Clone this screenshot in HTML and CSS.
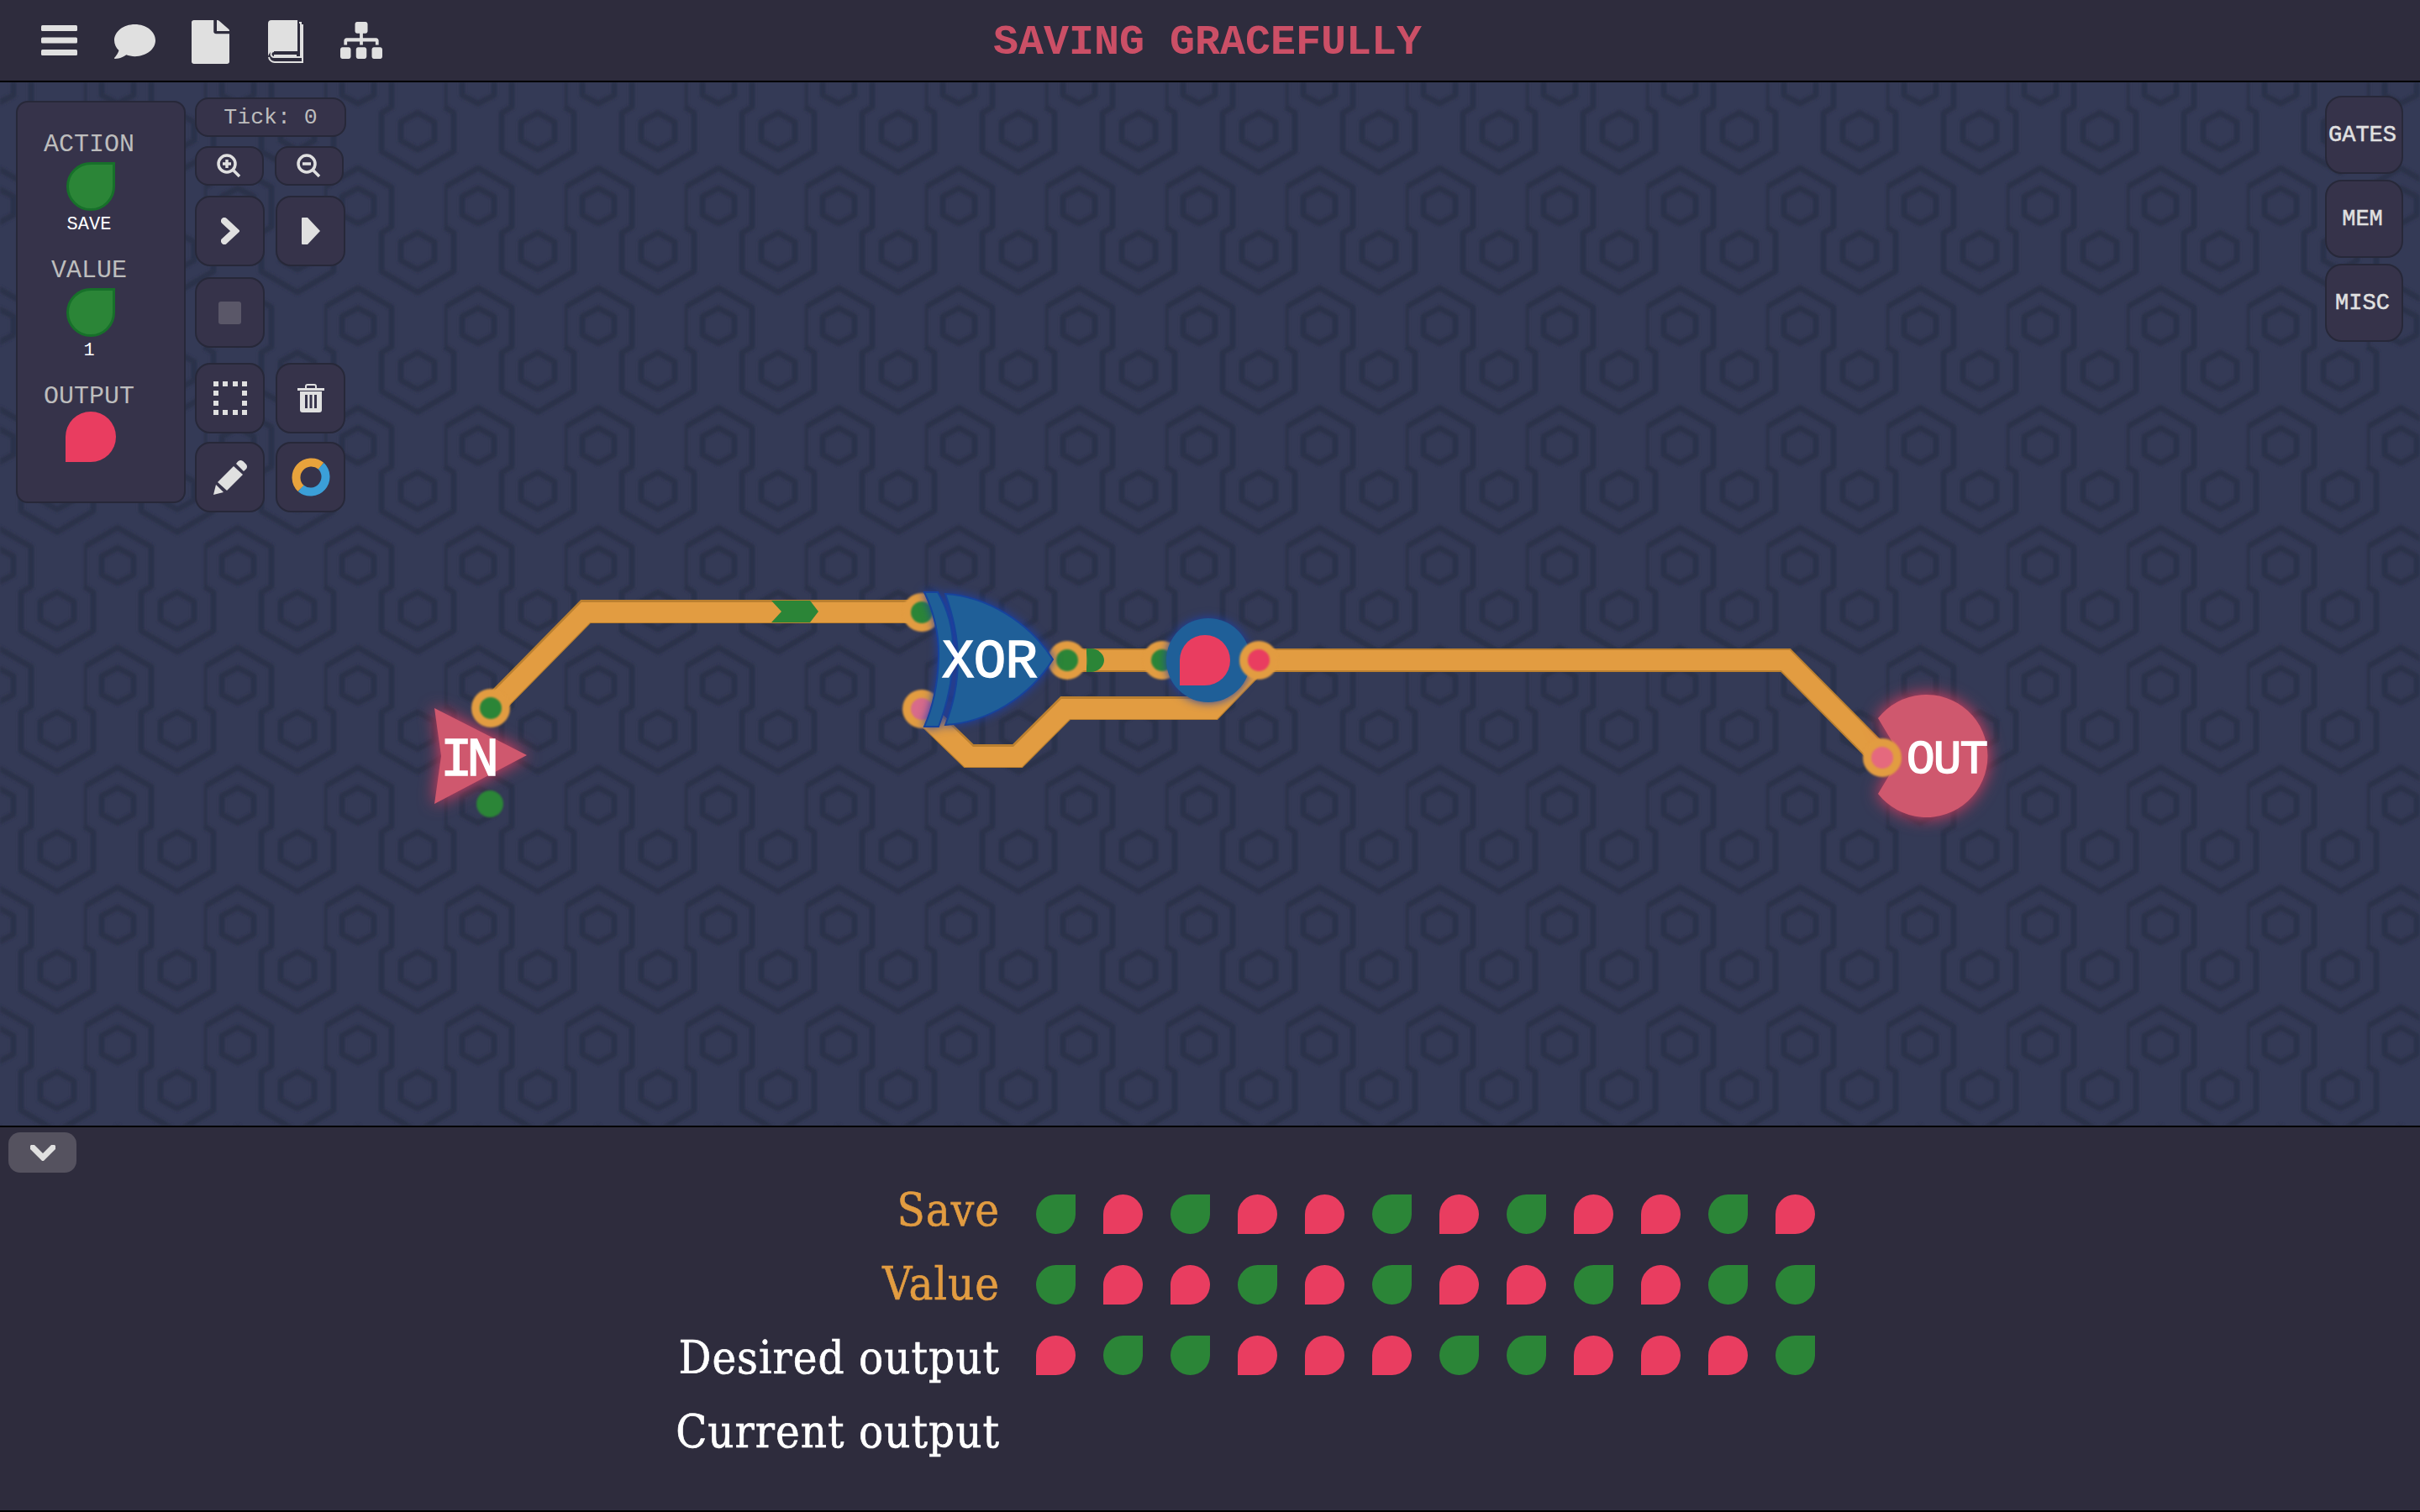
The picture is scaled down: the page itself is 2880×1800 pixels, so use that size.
FILE: index.html
```html
<!DOCTYPE html>
<html lang="en">
<head>
<meta charset="utf-8">
<title>Saving Gracefully</title>
<link rel="stylesheet" href="styles.css">
</head>
<body>
<div class="app">
  <header class="topbar">
    <nav class="menu">
      <span class="menu-item"><svg class="ic-bars" viewBox="0 0 43 36"><rect y="0" width="43" height="7" rx="1.5"/><rect y="14.500" width="43" height="7" rx="1.5"/><rect y="29" width="43" height="7" rx="1.5"/></svg></span>
      <span class="menu-item"><svg class="ic-chat" viewBox="0 0 512 512" preserveAspectRatio="none"><path d="M256 32C114.600 32 0 125.100 0 240c0 49.600 21.400 95 57 130.700C44.500 421.100 2.700 466 2.200 466.500c-2.200 2.300-2.800 5.700-1.500 8.700S4.800 480 8 480c66.300 0 116-31.800 140.600-51.400 32.700 12.300 69 19.400 107.400 19.400 141.400 0 256-93.100 256-208S397.400 32 256 32z"/></svg></span>
      <span class="menu-item"><svg class="ic-file" viewBox="0 0 384 512" preserveAspectRatio="none"><path d="M224 136V0H24C10.700 0 0 10.700 0 24v464c0 13.300 10.700 24 24 24h336c13.300 0 24-10.700 24-24V160H248c-13.200 0-24-10.800-24-24zm160-14.100v6.100H256V0h6.100c6.400 0 12.500 2.500 17 7l97.900 98c4.500 4.500 7 10.600 7 16.900z"/></svg></span>
      <span class="menu-item"><svg class="ic-book" viewBox="0 0 42 51"><path d="M4 0h31v37H8a8 8 0 0 0-8 6V4a4 4 0 0 1 4-4z"/><path d="M37 3h2v41H7a3.500 3.500 0 0 1 0-7h0" class="book-line"/><path d="M41 5v45H8a7 7 0 0 1-7-6" class="book-line"/><rect x="7" y="41" width="27" height="2.500"/></svg></span>
      <span class="menu-item"><svg class="ic-map" viewBox="0 0 640 512" preserveAspectRatio="none"><path d="M128 352H32c-17.670 0-32 14.330-32 32v96c0 17.670 14.330 32 32 32h96c17.670 0 32-14.330 32-32v-96c0-17.670-14.330-32-32-32zm-24-80h192v48h48v-48h192v48h48v-57.590c0-21.170-17.230-38.410-38.410-38.410H344v-64h40c17.670 0 32-14.330 32-32V32c0-17.670-14.330-32-32-32H256c-17.670 0-32 14.330-32 32v96c0 17.670 14.330 32 32 32h40v64H94.410C73.230 224 56 241.230 56 262.410V320h48v-48zm264 80h-96c-17.670 0-32 14.330-32 32v96c0 17.670 14.330 32 32 32h96c17.670 0 32-14.330 32-32v-96c0-17.670-14.330-32-32-32zm240 0h-96c-17.670 0-32 14.330-32 32v96c0 17.670 14.330 32 32 32h96c17.670 0 32-14.330 32-32v-96c0-17.670-14.330-32-32-32z"/></svg></span>
    </nav>
    <h1 class="title">SAVING GRACEFULLY</h1>
    <div></div>
  </header>

  <main class="canvas">
    <svg class="board" viewBox="0 98 2880 1242" width="2880" height="1242">
      <defs>
        <g id="hexcell" class="hex-line">
          <polyline points="0,70 0,23 40,0 80,23 80,70 68,77 68,123 111,148 154,123 154,77 143,70"/>
          <polygon points="111,77 131,88 131,110 111,121 91,110 91,88"/>
          <polygon points="40,24 59,34 59,56 40,66 21,56 21,34"/>
        </g>
        <pattern id="hex" width="143" height="142.700" patternUnits="userSpaceOnUse" patternTransform="translate(672 200)">
          <use href="#hexcell"/>
          <use href="#hexcell" x="-143"/>
          <use href="#hexcell" y="-142.700"/>
          <use href="#hexcell" x="-143" y="-142.700"/>
          <use href="#hexcell" y="142.700"/>
          <use href="#hexcell" x="-143" y="142.700"/>
        </pattern>
        <filter id="soft" x="0" y="0" width="100%" height="100%"><feGaussianBlur stdDeviation="1.400"/></filter>
      </defs>
      <rect class="hex-bg" x="0" y="98" width="2880" height="1242"/>
      <rect class="hex-fill" x="0" y="98" width="2880" height="1242" fill="url(#hex)" filter="url(#soft)"/>

      <!-- wires -->
      <g class="wire-edge">
        <polyline points="584,843 697,728 1096,728"/>
        <polyline points="1270,786 1384,786"/>
        <polyline points="1498,786 2125,786 2240,902"/>
        <polyline points="1498,786 1443,843 1268,843 1211,900 1153,900 1095,844"/>
      </g>
      <g class="wire-core">
        <polyline points="584,844 697,729 1096,729"/>
        <polyline points="1270,786 1384,786"/>
        <polyline points="1498,786 2125,786 2240,902"/>
        <polyline points="1498,787 1443,844 1268,844 1211,901 1153,901 1095,845"/>
      </g>
      <polygon class="sig-green" points="918,715 964,715 974,728 964,741 918,741 930,728"/>
      <path class="sig-green" d="M1293 772h5c9 0 16 7 16 14s-7 14-16 14h-5z"/>

      <!-- input node -->
      <polygon class="node-red glow-red" points="517,843 627,899 517,957 525,900"/>
      <text class="node-label" x="524" y="923" textLength="70">IN</text>
      <g class="soft-pin">
        <circle class="pin" cx="584" cy="843" r="18"/>
        <circle class="pin-green" cx="583" cy="957" r="16"/>
      </g>

      <!-- xor gate -->
      <g class="soft-pin">
        <circle class="pin" cx="1097" cy="729" r="18"/>
        <circle class="pin pin-pink" cx="1097" cy="844" r="18"/>
        <circle class="pin" cx="1270" cy="786" r="18"/>
      </g>
      <g class="glow-blue">
        <path class="gate-back" d="M1100 705h16c14 24 20 52 18 80-1 29-8 56-17 80h-17c11-25 16-52 17-80 1-28-6-57-17-80z"/>
        <path class="gate-body" d="M1125 707c50 3 100 34 128 78-28 45-78 75-128 78 10-25 15-52 15-78s-6-53-15-78z"/>
      </g>
      <text class="node-label" x="1121" y="806" textLength="114">XOR</text>

      <!-- buffer node -->
      <g class="soft-pin">
        <circle class="pin" cx="1383" cy="786" r="18"/>
      </g>
      <circle class="node-fill glow-blue" cx="1438" cy="786" r="50"/>
      <path class="leaf-red-shape" d="M1404 816v-30a30 30 0 1 1 30 30z"/>
      <g class="soft-pin">
        <circle class="pin pin-red" cx="1498" cy="786" r="18"/>
      </g>

      <!-- output node -->
      <path class="node-red glow-red" d="M2235 855A73 73 0 1 1 2235 945L2262 900z"/>
      <g class="soft-pin">
        <circle class="pin pin-pink2" cx="2240" cy="902" r="18"/>
      </g>
      <text class="node-label small" x="2269" y="920" textLength="97">OUT</text>
    </svg>

    <div class="hud">
      <aside class="panel">
        <section class="io">
          <div class="io-label">ACTION</div>
          <div class="leaf leaf-g big"></div>
          <div class="io-sub">SAVE</div>
        </section>
        <section class="io">
          <div class="io-label">VALUE</div>
          <div class="leaf leaf-g big"></div>
          <div class="io-sub">1</div>
        </section>
        <section class="io">
          <div class="io-label tight">OUTPUT</div>
          <div class="leaf leaf-r bigr"></div>
        </section>
      </aside>
      <div class="tools">
        <div class="tick">Tick: 0</div>
        <div class="tool-row gap-a">
          <button class="btn sm"><svg class="ic-z" viewBox="0 0 30 30"><circle cx="12" cy="12" r="10"/><path d="M20 20l7 7M7 12h10M12 7v10"/></svg></button>
          <button class="btn sm"><svg class="ic-z" viewBox="0 0 30 30"><circle cx="12" cy="12" r="10"/><path d="M20 20l7 7M7 12h10"/></svg></button>
        </div>
        <div class="tool-row gap-b">
          <button class="btn"><svg class="ic-next" viewBox="0 0 22 32"><path d="M4 4l13 12L4 28"/></svg></button>
          <button class="btn"><svg class="ic-play" viewBox="0 0 22 32"><path d="M1 0h6l15 16L7 32H1a1 1 0 0 1-1-1V1a1 1 0 0 1 1-1z"/></svg></button>
        </div>
        <div class="tool-row gap-c">
          <button class="btn"><span class="stop"></span></button>
        </div>
        <div class="tool-row gap-d">
          <button class="btn"><svg class="ic-sel" viewBox="0 0 40 40"><path d="M0 0h6v6H0zM11 0h6v6h-6zM23 0h6v6h-6zM34 0h6v6h-6zM0 11h6v6H0zM34 11h6v6h-6zM0 23h6v6H0zM34 23h6v6h-6zM0 34h6v6H0zM11 34h6v6h-6zM23 34h6v6h-6zM34 34h6v6h-6z"/></svg></button>
          <button class="btn"><svg class="ic-trash" viewBox="0 0 32 34"><path d="M0 5h32v3H0z"/><path class="trash-handle" d="M10 5.500V3c0-1 1-2 2-2h8c1 0 2 1 2 2v2.500"/><path d="M3 9h26v22c0 2-1 3-3 3H6c-2 0-3-1-3-3zm6 4v16h3V13zm5.500 0v16h3V13zm5.500 0v16h3V13z" fill-rule="evenodd"/></svg></button>
        </div>
        <div class="tool-row gap-e">
          <button class="btn"><svg class="ic-pen" viewBox="0 0 40 41"><path d="M0 41l3-12 9 9z"/><path d="M5 26L24 7l11 10-19 19z"/><path d="M27 4l2-2.500c2-2 4.500-2 6.500-.2l3 3c2 2 2 4.500 0 6.500L36 13z"/></svg></button>
          <button class="btn"><svg class="ic-ring" viewBox="0 0 46 46"><path class="ring-b" d="M35 9.600A18 18 0 0 1 11 36.400"/><path class="ring-o" d="M11 36.400A18 18 0 0 1 35 9.600"/></svg></button>
        </div>
      </div>
    </div>

    <div class="palette">
      <button class="btn pal">GATES</button>
      <button class="btn pal">MEM</button>
      <button class="btn pal">MISC</button>
    </div>
  </main>

  <footer class="bottom">
    <button class="collapse"><svg class="ic-chev" viewBox="0 0 30 19"><path d="M3 3l12 12L27 3"/></svg></button>
    <div class="truth">
      <div class="labels">
        <div class="row-label hl">Save</div>
        <div class="row-label hl">Value</div>
        <div class="row-label">Desired output</div>
        <div class="row-label">Current output</div>
      </div>
      <div class="seqs">
        <div class="seq"><i class="leaf leaf-g"></i><i class="leaf leaf-r"></i><i class="leaf leaf-g"></i><i class="leaf leaf-r"></i><i class="leaf leaf-r"></i><i class="leaf leaf-g"></i><i class="leaf leaf-r"></i><i class="leaf leaf-g"></i><i class="leaf leaf-r"></i><i class="leaf leaf-r"></i><i class="leaf leaf-g"></i><i class="leaf leaf-r"></i></div>
        <div class="seq"><i class="leaf leaf-g"></i><i class="leaf leaf-r"></i><i class="leaf leaf-r"></i><i class="leaf leaf-g"></i><i class="leaf leaf-r"></i><i class="leaf leaf-g"></i><i class="leaf leaf-r"></i><i class="leaf leaf-r"></i><i class="leaf leaf-g"></i><i class="leaf leaf-r"></i><i class="leaf leaf-g"></i><i class="leaf leaf-g"></i></div>
        <div class="seq"><i class="leaf leaf-r"></i><i class="leaf leaf-g"></i><i class="leaf leaf-g"></i><i class="leaf leaf-r"></i><i class="leaf leaf-r"></i><i class="leaf leaf-r"></i><i class="leaf leaf-g"></i><i class="leaf leaf-g"></i><i class="leaf leaf-r"></i><i class="leaf leaf-r"></i><i class="leaf leaf-r"></i><i class="leaf leaf-g"></i></div>
      </div>
    </div>
  </footer>
</div>
</body>
</html>
```
FILE: styles.css
```css
* { box-sizing: border-box; }
html, body { margin: 0; padding: 0; height: 100%; background: #2e2c3d; }
body { font-family: "Liberation Mono", monospace; color: #e0e0e0; overflow: hidden; }
.app { display: flex; flex-direction: column; width: 2880px; height: 1800px; }

/* top bar */
.topbar { flex: 0 0 98px; display: grid; grid-template-columns: 1fr auto 1fr; align-items: center; padding-right: 6px; background: #2e2c3d; border-bottom: 2px solid #000; }
.menu { display: flex; padding-left: 25px; }
.menu-item { width: 90px; height: 96px; display: flex; align-items: center; justify-content: center; }
.menu-item svg { fill: #e0e0e0; display: block; }
.ic-bars { width: 43px; height: 36px; }
.ic-chat { width: 49px; height: 47px; margin-top: 2px; }
.menu-item .ic-file { width: 45px; height: 52px; margin-top: 4px; }
.menu-item .ic-book { width: 42px; height: 51px; margin-top: 3px; }
.ic-map { width: 50px; height: 44px; }
.menu-item .book-line { fill: none; stroke: #e0e0e0; stroke-width: 2; }
.title { margin: 5px 0 0; font: bold 50px/1 "Liberation Mono", monospace; color: #cb4f66; }

/* canvas */
.canvas { position: relative; flex: 1 1 auto; overflow: hidden; background: #343a56; }
.board { position: absolute; left: 0; top: 0; display: block; }
.hex-bg { fill: #343a56; }
.hex-line polyline, .hex-line polygon { fill: none; stroke: #2b3049; stroke-width: 7; stroke-linejoin: round; }

/* diagram */
.wire-edge polyline { fill: none; stroke: #bb8030; stroke-width: 28; stroke-linejoin: miter; }
.wire-core polyline { fill: none; stroke: #e29c41; stroke-width: 24; stroke-linejoin: miter; }
.sig-green { fill: #2b8537; }
.soft-pin { filter: blur(0.8px); }
.pin { fill: #2b8537; stroke: #e29c41; stroke-width: 10; }
.pin.pin-pink { fill: #d86b8a; }
.pin.pin-pink2 { fill: #e5697e; }
.pin.pin-red { fill: #e93d60; }
.pin-green { fill: #2b8537; }
.node-red { fill: #cf586e; }
.glow-red { filter: drop-shadow(0 0 10px #e93d60); }
.glow-blue { filter: drop-shadow(0 0 6px #1d3fa8); }
.gate-body { fill: #1f5f98; stroke: #17439c; stroke-width: 2; }
.gate-back { fill: #1f5f98; stroke: #17439c; stroke-width: 2; }
.node-fill { fill: #1f5f98; }
.leaf-red-shape { fill: #e93d60; }
.node-label { font: normal 64px "Liberation Mono", monospace; fill: #fff; stroke: #fff; stroke-width: 1.500px; }
.node-label.small { font-size: 56px; }

/* hud */
.hud { position: absolute; left: 19px; top: 18px; display: flex; gap: 11px; align-items: flex-start; }
.panel { width: 202px; height: 479px; margin-top: 4px; padding: 35px 28px 0 0; display: flex; flex-direction: column; gap: 28px; background: #36334a; border: 2px solid #272839; border-radius: 14px; }
.io { display: flex; flex-direction: column; align-items: center; }
.io-label { font-size: 30px; line-height: 30px; color: #bdbdbd; }
.io-sub { font-size: 22px; line-height: 22px; margin-top: 6px; color: #fff; }
.leaf { display: block; width: 47px; height: 47px; border-radius: 50%; }
.leaf-g { background: #2b8537; border-top-right-radius: 0; }
.leaf-r { background: #e93d60; border-bottom-left-radius: 0; }
.leaf.big { width: 58px; height: 58px; margin: 6px 0 0 4px; border: 3px solid #17702a; }
.leaf.bigr { width: 60px; height: 60px; margin: 3px 0 0 4px; }
.tools { display: flex; flex-direction: column; }
.tick { width: 180px; height: 47px; display: flex; align-items: center; justify-content: center; font-size: 26.500px; color: #bdbdbd; background: #36334a; border: 2px solid #272839; border-radius: 16px; }
.tool-row { display: flex; gap: 13px; }
.gap-a { margin-top: 11px; }
.gap-b { margin-top: 12px; }
.gap-c { margin-top: 13px; }
.gap-d { margin-top: 18px; }
.gap-e { margin-top: 10px; }
.btn { width: 83px; height: 84px; padding: 0; display: flex; align-items: center; justify-content: center; font-family: inherit; color: #e0e0e0; background: #36334a; border: 2px solid #272839; border-radius: 18px; }
.btn.sm { width: 82px; height: 47px; border-radius: 16px; }
.ic-z { width: 30px; height: 30px; }
.ic-z circle, .ic-z path { fill: none; stroke: #e0e0e0; stroke-width: 3.500; }
.ic-next { width: 22px; height: 32px; }
.ic-next path { fill: none; stroke: #e0e0e0; stroke-width: 8; stroke-linecap: round; stroke-linejoin: miter; }
.ic-play { width: 22px; height: 32px; fill: #e0e0e0; }
.stop { display: block; width: 27px; height: 27px; border-radius: 3px; background: #5a5768; }
.ic-sel { width: 40px; height: 40px; fill: #e0e0e0; }
.ic-trash { width: 32px; height: 34px; fill: #e0e0e0; }
.ic-trash .trash-handle { fill: none; stroke: #e0e0e0; stroke-width: 2; }
.ic-pen { width: 40px; height: 41px; fill: #e0e0e0; }
.ic-ring { width: 46px; height: 46px; }
.ic-ring path { fill: none; stroke-width: 10; }
.ring-b { stroke: #3b9fd8; }
.ring-o { stroke: #e8a33c; }

.palette { position: absolute; right: 20px; top: 16px; display: flex; flex-direction: column; gap: 7px; }
.btn.pal { width: 93px; height: 93px; padding-right: 4px; font-size: 27px; font-weight: normal; -webkit-text-stroke: 0.500px #e0e0e0; border-radius: 20px; }

/* bottom */
.bottom { position: relative; flex: 0 0 460px; background: #2e2c3d; border-top: 2px solid #000; border-bottom: 2px solid #000; }
.collapse { position: absolute; left: 10px; top: 6px; width: 81px; height: 48px; padding: 0; display: flex; align-items: center; justify-content: center; background: #55525f; border: 0; border-radius: 14px; }
.ic-chev { width: 30px; height: 19px; }
.ic-chev path { fill: none; stroke: #e0e0e0; stroke-width: 7; stroke-linecap: round; }
.truth { display: flex; }
.labels { width: 1190px; padding-top: 55px; flex: none; }
.row-label { height: 88px; line-height: 88px; text-align: right; font-family: "DejaVu Serif", serif; font-stretch: condensed; font-size: 54px; letter-spacing: 1px; -webkit-text-stroke: 0.600px currentColor; color: #fff; }
.row-label.hl { color: #e29c41; }
.seqs { margin: 80px 0 0 43px; display: flex; flex-direction: column; gap: 37px; }
.seq { display: flex; gap: 33px; }
```
